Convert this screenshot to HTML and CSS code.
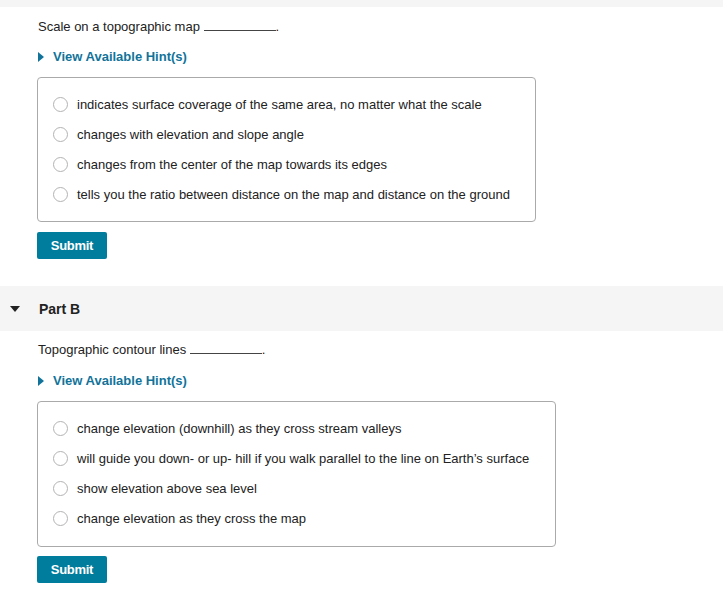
FILE: index.html
```html
<!DOCTYPE html>
<html>
<head>
<meta charset="utf-8">
<link rel="stylesheet" href="styles.css">
</head>
<body>
<div class="topbar"></div>
<section class="part part-a">
  <p class="question">Scale on a topographic map <span class="blank"></span>.</p>
  <div class="hint"><span class="tri-right"></span>View Available Hint(s)</div>
  <div class="choices">
    <label class="choice"><span class="radio"></span>indicates surface coverage of the same area, no matter what the scale</label>
    <label class="choice"><span class="radio"></span>changes with elevation and slope angle</label>
    <label class="choice"><span class="radio"></span>changes from the center of the map towards its edges</label>
    <label class="choice"><span class="radio"></span>tells you the ratio between distance on the map and distance on the ground</label>
  </div>
  <button class="submit">Submit</button>
</section>
<div class="part-header"><span class="tri-down"></span>Part B</div>
<section class="part part-b">
  <p class="question">Topographic contour lines <span class="blank"></span>.</p>
  <div class="hint"><span class="tri-right"></span>View Available Hint(s)</div>
  <div class="choices wide">
    <label class="choice"><span class="radio"></span>change elevation (downhill) as they cross stream valleys</label>
    <label class="choice"><span class="radio"></span>will guide you down- or up- hill if you walk parallel to the line on Earth’s surface</label>
    <label class="choice"><span class="radio"></span>show elevation above sea level</label>
    <label class="choice"><span class="radio"></span>change elevation as they cross the map</label>
  </div>
  <button class="submit">Submit</button>
</section>
</body>
</html>
```
FILE: styles.css
```css
* { box-sizing: border-box; }
body {
  margin: 0;
  font-family: "Liberation Sans", Arial, sans-serif;
  font-size: 13px;
  color: #222;
  background: #fff;
}
.topbar {
  height: 7px;
  background: #f5f5f5;
}
.part {
  padding-left: 37px;
  display: flex;
  flex-direction: column;
  align-items: flex-start;
}
.question {
  margin: 11px 0 0 1px;
  line-height: 18px;
}
.part-b .question { margin-top: 10px; }
.blank {
  display: inline-block;
  width: 72px;
  border-bottom: 1px solid #444;
  vertical-align: baseline;
}
.hint {
  margin: 12px 0 0 1px;
  line-height: 18px;
  font-weight: bold;
  color: #12739a;
  display: flex;
  align-items: center;
}
.part-b .hint { margin-top: 13px; }
.tri-right {
  width: 0;
  height: 0;
  border-top: 5px solid transparent;
  border-bottom: 5px solid transparent;
  border-left: 6px solid #12739a;
  margin-right: 9px;
}
.choices {
  margin-top: 11px;
  width: 499px;
  border: 1px solid #aaa;
  border-radius: 4px;
  padding: 11px 0 12px 15px;
  display: flex;
  flex-direction: column;
}
.part-b .choices { margin-top: 11px; padding-top: 11px; padding-bottom: 13px; }
.part-b .submit { margin-top: 9px; }
.choices.wide { width: 519px; }
.choice {
  height: 30px;
  display: flex;
  align-items: center;
  color: #222;
}
.radio {
  width: 15px;
  height: 15px;
  border: 1px solid #b3b3b3;
  border-radius: 50%;
  background: #fff;
  margin-right: 9px;
  flex: none;
}
.submit {
  margin-top: 10px;
  width: 70px;
  height: 27px;
  border: none;
  border-radius: 2px;
  background: #007c9c;
  color: #fff;
  font-family: "Liberation Sans", Arial, sans-serif;
  font-size: 13px;
  font-weight: bold;
  padding: 0;
  letter-spacing: -0.3px;
}
.part-header {
  margin-top: 27px;
  height: 45px;
  background: #f5f5f5;
  display: flex;
  align-items: center;
  padding-left: 10px;
  font-weight: bold;
  font-size: 14px;
  color: #222;
}
.tri-down {
  width: 0;
  height: 0;
  border-left: 5px solid transparent;
  border-right: 5px solid transparent;
  border-top: 6px solid #222;
  margin-right: 19px;
  margin-top: 1px;
}
```
